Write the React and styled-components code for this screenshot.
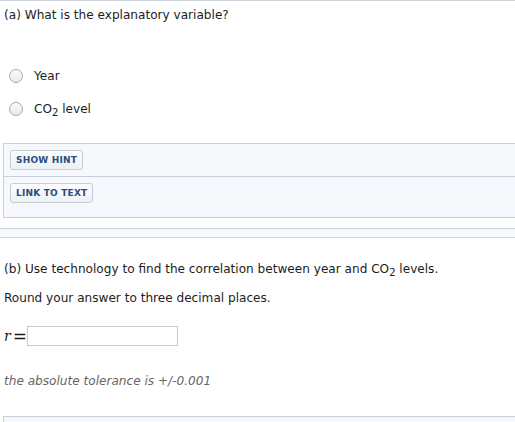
import React from "react";
import styled, { createGlobalStyle } from "styled-components";

const Global = createGlobalStyle`
  html, body { margin: 0; padding: 0; background: #fff; overflow: hidden; }
  body { font-family: "DejaVu Sans", Verdana, sans-serif; color: #1d1d1d; }
`;

const Page = styled.div`
  width: 515px;
  height: 422px;
  overflow: hidden;
`;

const Part = styled.section`
  border-top: 1px solid #cdd3dd;
  padding: 6px 0 0 0;
`;

const Question = styled.p`
  margin: 0;
  padding-left: 4px;
  font-size: 12.1px;
  line-height: 16px;
`;

const Options = styled.div`
  display: flex;
  flex-direction: column;
  gap: 17px;
  padding: 45px 0 0 9px;
`;

const Option = styled.label`
  display: flex;
  align-items: center;
  gap: 11px;
  font-size: 12.1px;
  line-height: 16px;
`;

const Radio = styled.span`
  width: 12px;
  height: 12px;
  border-radius: 50%;
  border: 1px solid #a9a9a9;
  background: linear-gradient(#fafafa, #e9e9e9);
  box-sizing: content-box;
  flex: none;
`;

const HintBox = styled.div`
  margin: 26px -10px 0 3px;
  border: 1px solid #c9d0dc;
  background: #f5f8fc;
`;

const HintRow = styled.div`
  display: flex;
  padding: ${(p) => p.$pad};
  border-top: ${(p) => (p.$first ? "none" : "1px solid #c9d0dc")};
`;

const Button = styled.span`
  display: block;
  font-size: 9px;
  font-weight: bold;
  color: #2b4c7e;
  letter-spacing: 0.2px;
  padding: 3px 5px 3px 5px;
  line-height: 12px;
  border: 1px solid #c6ccd6;
  border-radius: 3px;
  background: linear-gradient(#fbfcfd, #eef1f5);
`;

const Band = styled.div`
  margin-top: 10px;
  height: 8px;
  border-top: 1px solid #cdd3dd;
  border-bottom: 1px solid #cdd3dd;
  background: #f5f8fc;
`;

const PartB = styled.section`
  padding: 23px 0 0 4px;
`;

const Line = styled.p`
  margin: 0 0 13px 0;
  font-size: 12.1px;
  line-height: 16px;
`;

const Sub = styled.sub`
  font-size: 10px;
  vertical-align: -3px;
  line-height: 0;
`;

const AnswerRow = styled.div`
  display: flex;
  align-items: center;
  margin-top: 20px;
`;

const Var = styled.span`
  font-family: "DejaVu Serif", "Liberation Serif", serif;
  font-style: italic;
  font-size: 14px;
  margin-right: 2px;
`;

const Eq = styled.span`
  font-family: "DejaVu Sans", sans-serif;
  font-size: 17px;
  line-height: 16px;
`;

const Input = styled.span`
  display: block;
  width: 149px;
  height: 18px;
  border: 1px solid #c8c8c8;
  background: #fff;
`;

const Tolerance = styled.p`
  margin: 27px 0 0 0;
  font-size: 12.1px;
  line-height: 16px;
  font-style: italic;
  color: #666;
`;

const BottomBox = styled.div`
  margin: 27px -10px 0 3px;
  height: 20px;
  border-top: 1px solid #c9d0dc;
  border-left: 1px solid #c9d0dc;
  background: #f5f8fc;
`;

export default function App() {
  return (
    <Page>
      <Global />
      <Part>
        <Question>(a) What is the explanatory variable?</Question>
        <Options>
          <Option><Radio />Year</Option>
          <Option><Radio /><span>CO<Sub>2</Sub> level</span></Option>
        </Options>
        <HintBox>
          <HintRow $first $pad="6px 0 6px 6px"><Button>SHOW HINT</Button></HintRow>
          <HintRow $pad="6px 0 14px 6px"><Button>LINK TO TEXT</Button></HintRow>
        </HintBox>
        <Band />
      </Part>
      <PartB>
        <Line>(b) Use technology to find the correlation between year and CO<Sub>2</Sub> levels.</Line>
        <Line>Round your answer to three decimal places.</Line>
        <AnswerRow>
          <Var>r</Var><Eq>=</Eq><Input />
        </AnswerRow>
        <Tolerance>the absolute tolerance is +/-0.001</Tolerance>
      </PartB>
      <BottomBox />
    </Page>
  );
}
